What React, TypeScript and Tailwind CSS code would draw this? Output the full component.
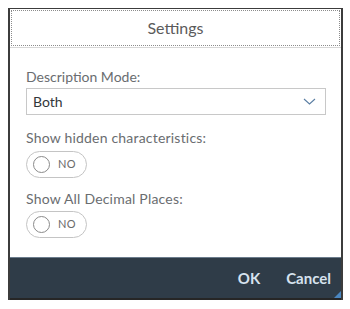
import React from "react"

function Toggle() {
  return (
    <div className="flex items-center w-[61px] h-[27px] rounded-full border border-[#c4c4c4] bg-white pl-[6px] gap-[8px]">
      <span className="block w-[17px] h-[17px] rounded-full border-[1.5px] border-[#8a8a8a] bg-white" />
      <span className="text-[11px] text-[#6a6a6a] tracking-wide">NO</span>
    </div>
  )
}

export default function App() {
  return (
    <div className="w-[350px] h-[309px] bg-white pt-2 pl-2" style={{ fontFamily: "Lato, 'Open Sans', sans-serif" }}>
      <div className="flex flex-col w-[335px] h-[292px] border-x-2 border-t border-[#3c3c3c] bg-white">
        {/* header */}
        <div className="h-[39px] p-[1px] border-b border-[#d6d6d6]">
          <div className="h-full flex items-center justify-center border border-dotted border-[#8c8c8c]">
            <span className="text-[16px] text-[#5b5b5b]">Settings</span>
          </div>
        </div>

        {/* body */}
        <div className="flex-1 flex flex-col px-4 pt-[20px]">
          <label className="text-[14px] leading-[18px] text-[#6a6d70]">Description Mode:</label>
          <div className="mt-[2px] h-[27px] w-[300px] flex items-center justify-between border border-[#c8c8c8] pl-[6px] pr-[9px]">
            <span className="text-[14px] text-[#32363a]">Both</span>
            <svg width="13" height="7" viewBox="0 0 13 7" fill="none">
              <path d="M1 1l5.5 5L12 1" stroke="#5a7ea3" strokeWidth="1.1" />
            </svg>
          </div>

          <label className="mt-[14px] text-[14px] leading-[18px] text-[#6a6d70] tracking-[0.2px]">Show hidden characteristics:</label>
          <div className="mt-[4px]">
            <Toggle />
          </div>

          <label className="mt-[12px] text-[14px] leading-[18px] text-[#6a6d70] tracking-[0.2px]">Show All Decimal Places:</label>
          <div className="mt-[3px]">
            <Toggle />
          </div>
        </div>

        {/* footer */}
        <div className="relative h-[43px] bg-[#2f3c48] border-t border-[#6b7c8c] border-b-2 border-b-[#262626] flex items-center justify-end gap-[26px] pr-[10px]">
          <span className="text-[15px] font-bold text-[#d6e2ee]">OK</span>
          <span className="text-[15px] font-bold text-[#d6e2ee]">Cancel</span>
          <svg className="absolute right-0 bottom-0" width="7" height="7" viewBox="0 0 7 7">
            <path d="M7 0L0 7H7Z" fill="#4a86c0" />
          </svg>
        </div>
      </div>
    </div>
  )
}
